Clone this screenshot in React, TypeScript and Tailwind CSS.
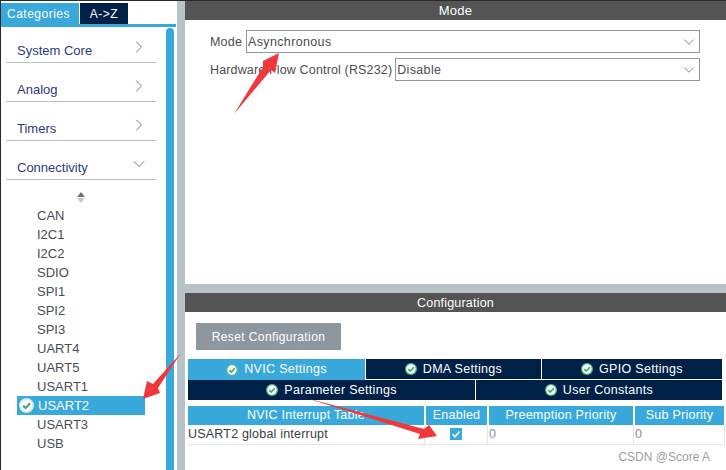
import { ChevronDown, ChevronRight } from 'lucide-react'

const categories = ['System Core', 'Analog', 'Timers']
const peripherals = ['CAN', 'I2C1', 'I2C2', 'SDIO', 'SPI1', 'SPI2', 'SPI3', 'UART4', 'UART5', 'USART1', 'USART2', 'USART3', 'USB']

const OkIcon = ({ size = 12, ring = '#5cb88a' }: { size?: number, ring?: string }) => (
    <svg width={size} height={size} viewBox="0 0 16 16" className="shrink-0">
        <circle cx="8" cy="8" r="8" fill={ring} />
        <circle cx="8" cy="8" r="6.2" fill="#ffffff" />
        <path d="M4.4 8.2 L7.1 10.8 L11.8 5.6" fill="none" stroke="#3fa56c" strokeWidth="2.2" />
    </svg>
)

const Category = ({ name, open }: { name: string, open?: boolean }) => (
    <div className="h-[39px] w-[150px] ml-[5px] flex items-center justify-between border-b border-[#b8c2c9] pt-[16px] pl-[11px] pr-[7px] text-[13px] text-[#2c3a7c]">
        <span>{name}</span>
        {open
            ? <ChevronDown size={20} strokeWidth={1.2} color="#77797c" className="-mt-[8px]" />
            : <ChevronRight size={20} strokeWidth={1.2} color="#77797c" className="-mt-[8px]" />}
    </div>
)

const Select = ({ value }: { value: string }) => (
    <div className="flex-1 h-[23px] border border-[#8f979e] flex items-center justify-between pl-[1px] pr-[1px] text-[#4a4d52] tracking-[0.35px]">
        <span className="mt-[2px]">{value}</span>
        <ChevronDown size={18} strokeWidth={1.2} color="#77797c" />
    </div>
)

const SettingTab = ({ label, active, className }: { label: string, active?: boolean, className: string }) => (
    <div className={`flex items-center justify-center gap-[6px] tracking-[0.3px] text-white ${active ? 'bg-[#39a9dc]' : 'bg-[#002147]'} ${className}`}>
        <OkIcon />
        <span>{label}</span>
    </div>
)

const HeadCell = ({ label, className }: { label: string, className: string }) => (
    <div className={`h-[19px] bg-[#39a9dc] text-white tracking-[0.25px] flex items-center justify-center ${className}`}>{label}</div>
)

const Arrows = () => (
    <svg width="726" height="470" viewBox="0 0 726 470" className="absolute left-0 top-0 pointer-events-none">
        <g fill="#f0373a">
            <path d="M233 113 L262 66 L262 60 L278 52 L274 72 L270 69 Z" />
            <path d="M180 352 L157 387 L159 392 L142 398 L146 380 L152 383 Z" />
            <path d="M305 397 L423 428 L428 424 L436 435 L417 438 L419 433 Z" />
        </g>
    </svg>
)

export default function App() {
    return (
        <div className="relative w-[726px] h-[470px] overflow-hidden bg-[#b8c2c9] border-t border-l border-[#2a2a2a] text-[12.5px] flex font-['Liberation_Sans',Arial,sans-serif]">
            <div className="w-[176px] h-full bg-white flex flex-col shrink-0">
                <div className="h-[23px] pt-[2px] flex items-stretch gap-[1px] text-[12px] tracking-[0.5px] text-white bg-white">
                    <div className="w-[78px] bg-[#39a9dc] flex items-center pl-[6px]">Categories</div>
                    <div className="w-[48px] bg-[#002147] flex items-center justify-center">A-&gt;Z</div>
                </div>
                <div className="h-[3px] bg-[#39a9dc] w-[175px]" />
                <div className="flex flex-1 min-h-0">
                    <div className="w-[164px] shrink-0 -mt-[3px]">
                        {categories.map((c) => <Category key={c} name={c} />)}
                        <Category name="Connectivity" open />
                        <div className="flex flex-col items-center w-[150px] ml-[5px] mt-[12px] mb-[3px] gap-[1px]">
                            <div className="w-0 h-0 border-x-[4px] border-x-transparent border-b-[5px] border-b-[#6e7276]" />
                            <div className="w-0 h-0 border-x-[4px] border-x-transparent border-t-[5px] border-t-[#c4c8cc]" />
                        </div>
                        <div className="flex flex-col">
                            {peripherals.map((p) => p === 'USART2'
                                ? (
                                    <div key={p} className="h-[19px] w-[128px] ml-[16px] bg-[#39a9dc] text-white text-[13px] flex items-center gap-[4px] pl-[2px]">
                                        <OkIcon size={15} ring="#d8e8e0" />
                                        <span>{p}</span>
                                    </div>
                                )
                                : <div key={p} className="h-[19px] pl-[36px] flex items-center text-[13px] text-[#4a4d52]">{p}</div>)}
                        </div>
                    </div>
                    <div className="w-[8px] ml-[1px] bg-[#39a9dc] rounded-t-[4px] mt-[1px]" />
                </div>
            </div>

            <div className="ml-[8px] flex-1 flex flex-col min-w-0">
                <div className="h-[19px] bg-[#535453] text-white text-center leading-[19px] text-[13px] tracking-[0.2px]">Mode</div>
                <div className="h-[264px] bg-white pt-[10px] pl-[25px] pr-[26px] flex flex-col gap-[5px] text-[#4a4d52]">
                    <div className="flex items-center gap-[4px]">
                        <span className="tracking-[0.2px] mt-[2px]">Mode</span>
                        <Select value="Asynchronous" />
                    </div>
                    <div className="flex items-center gap-[3px]">
                        <span className="tracking-[0.15px] mt-[2px]">Hardware Flow Control (RS232)</span>
                        <Select value="Disable" />
                    </div>
                </div>
                <div className="h-[9px]" />
                <div className="h-[19px] bg-[#535453] text-white text-center leading-[21px] tracking-[0.2px]">Configuration</div>
                <div className="flex-1 bg-white pl-[3px] pr-[1px] pt-[11px]">
                    <div className="ml-[8px] w-[145px] h-[27px] bg-[#8f979e] text-white text-[12px] flex items-center justify-center tracking-[0.4px]">Reset Configuration</div>
                    <div className="mt-[9px] w-[534px] flex flex-col gap-[1px]">
                        <div className="flex h-[20px] gap-[1px]">
                            <SettingTab active label="NVIC Settings" className="w-[177px] h-[21px]" />
                            <SettingTab label="DMA Settings" className="w-[175px]" />
                            <SettingTab label="GPIO Settings" className="flex-1" />
                        </div>
                        <div className="flex h-[20px] gap-[1px]">
                            <SettingTab label="Parameter Settings" className="w-[287px]" />
                            <SettingTab label="User Constants" className="flex-1" />
                        </div>
                    </div>
                    <div className="mt-[6px] w-[536px] flex gap-[2px]">
                        <HeadCell label="NVIC Interrupt Table" className="w-[236px]" />
                        <HeadCell label="Enabled" className="w-[61px]" />
                        <HeadCell label="Preemption Priority" className="w-[144px]" />
                        <HeadCell label="Sub Priority" className="flex-1" />
                    </div>
                    <div className="w-[537px] h-[20px] flex border-b border-[#e2e4e6] items-center text-[#3a3d42]">
                        <div className="w-[237px] h-full flex items-center border-r border-[#e2e4e6] tracking-[0.2px]">USART2 global interrupt</div>
                        <div className="w-[63px] h-full flex items-center justify-center border-r border-[#e2e4e6]">
                            <div className="w-[12px] h-[12px] -mt-[1px] bg-[#39a9dc] flex items-center justify-center">
                                <svg width="10" height="10" viewBox="0 0 10 10"><path d="M1.5 5.2 L4 7.8 L8.5 2.5" fill="none" stroke="#ffffff" strokeWidth="1.5" /></svg>
                            </div>
                        </div>
                        <div className="w-[146px] h-full flex items-center border-r border-[#e2e4e6] pl-[1px] text-[#8a8ea0]">0</div>
                        <div className="flex-1 h-full flex items-center border-r border-[#e2e4e6] pl-[1px] text-[#8a8ea0]">0</div>
                    </div>
                    <div className="mt-[3px] w-[534px] pr-[12px] text-[12px] text-right text-[#a0a0a0]">CSDN @Score A</div>
                </div>
            </div>
            <Arrows />
        </div>
    )
}
